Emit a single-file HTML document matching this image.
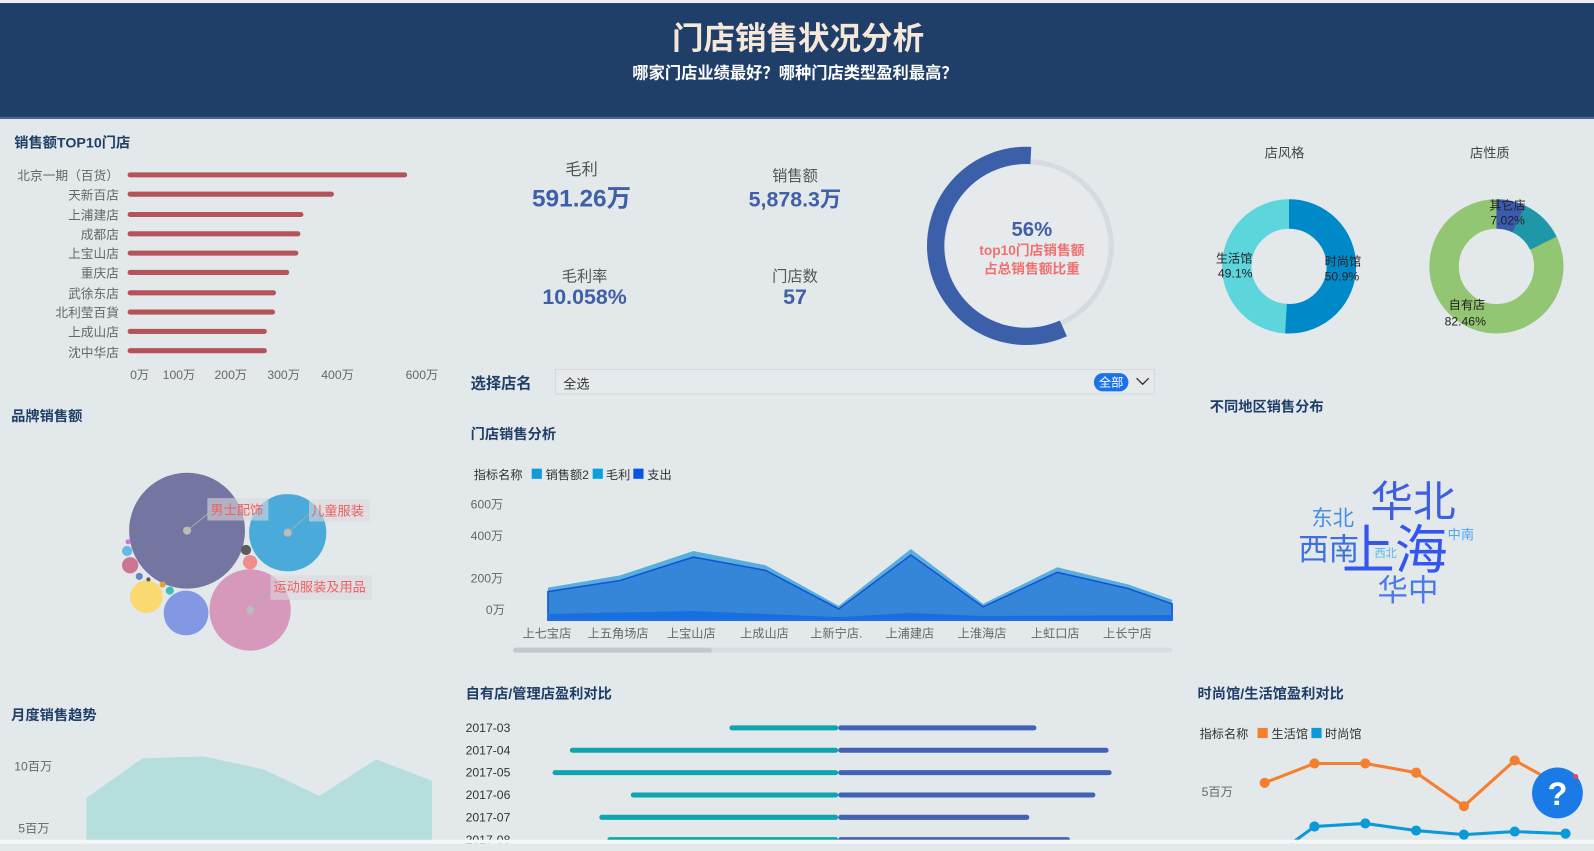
<!DOCTYPE html>
<html><head><meta charset="utf-8"><style>
*{margin:0;padding:0;box-sizing:border-box}
body{width:1594px;height:843px;background:#e3e8eb;font-family:"Liberation Sans","Noto Sans CJK SC",sans-serif;position:relative;overflow:hidden}
#w{position:absolute;left:0;top:0;width:1568px;height:830px;transform:scale(1.0166);transform-origin:0 0}
.a{position:absolute;white-space:nowrap}
.h{font-size:14px;font-weight:bold;color:#1f3f68}
.lb{font-size:12px;color:#666}
</style></head><body><div id="w">
<div class="a" style="left:0;top:0;width:1568px;height:3px;background:#eef1f3"></div>
<div class="a" style="left:0;top:3px;width:1568px;height:114px;background:#1f3f68;border-bottom:2px solid #4b6a91"></div>
<div class="a" style="left:0;width:1570px;top:12px;text-align:center;font-size:31px;font-weight:bold;color:#f5e8da">门店销售状况分析</div>
<div class="a" style="left:0;width:1564px;top:58px;text-align:center;font-size:16px;font-weight:bold;color:#fff">哪家门店业绩最好？哪种门店类型盈利最高？</div>

<div class="a h" style="left:14px;top:130px">销售额TOP10门店</div>
<div class="a" style="left:0;top:164px;width:117px;text-align:right;font-size:12.5px;color:#666;line-height:19.3px">北京一期（百货）<br>天新百店<br>上浦建店<br>成都店<br>上宝山店<br>重庆店<br>武徐东店<br>北利莹百貨<br>上成山店<br>沈中华店</div>
<div class="a lb" style="left:128px;top:360px">0万</div>
<div class="a lb" style="left:160px;top:360px">100万</div>
<div class="a lb" style="left:211px;top:360px">200万</div>
<div class="a lb" style="left:263px;top:360px">300万</div>
<div class="a lb" style="left:316px;top:360px">400万</div>
<div class="a lb" style="left:399px;top:360px">600万</div>

<div class="a" style="left:522px;width:100px;top:153px;text-align:center;font-size:16px;color:#555">毛利</div>
<div class="a" style="left:502px;width:140px;top:175px;text-align:center;font-size:24px;color:#3f5fa8;font-weight:bold">591.26万</div>
<div class="a" style="left:732px;width:100px;top:162px;text-align:center;font-size:15px;color:#555">销售额</div>
<div class="a" style="left:712px;width:140px;top:180px;text-align:center;font-size:21px;color:#3f5fa8;font-weight:bold">5,878.3万</div>
<div class="a" style="left:525px;width:100px;top:261px;text-align:center;font-size:15px;color:#555">毛利率</div>
<div class="a" style="left:505px;width:140px;top:281px;text-align:center;font-size:21px;color:#3f5fa8;font-weight:bold">10.058%</div>
<div class="a" style="left:732px;width:100px;top:261px;text-align:center;font-size:15px;color:#555">门店数</div>
<div class="a" style="left:732px;width:100px;top:281px;text-align:center;font-size:21px;color:#3f5fa8;font-weight:bold">57</div>

<div class="a" style="left:1244px;top:140px;font-size:13px;color:#444">店风格</div>
<div class="a" style="left:1446px;top:140px;font-size:13px;color:#444">店性质</div>

<div class="a" style="left:463px;top:366px;font-size:15px;font-weight:bold;color:#1f3f68">选择店名</div>
<div class="a" style="left:546px;top:363px;width:590px;height:25px;background:#e6eaed;border:1px solid #d3d8dc"></div>
<div class="a" style="left:554px;top:367px;font-size:13px;color:#333">全选</div>
<div class="a" style="left:1076px;top:367px;width:34px;height:18px;border-radius:9px;background:#1a73e8;color:#fff;font-size:12px;text-align:center;line-height:18px">全部</div>

<div class="a h" style="left:11px;top:399px">品牌销售额</div>
<div class="a h" style="left:463px;top:417px">门店销售分析</div>
<div class="a h" style="left:1190px;top:390px">不同地区销售分布</div>
<div class="a h" style="left:458px;top:672px">自有店/管理店盈利对比</div>
<div class="a h" style="left:11px;top:693px">月度销售趋势</div>
<div class="a h" style="left:1178px;top:672px">时尚馆/生活馆盈利对比</div>

<div class="a" style="left:466px;top:458px;font-size:12px;color:#333">指标名称 <span style="display:inline-block;width:10px;height:10px;background:#0f9ad8;margin-left:6px"></span> 销售额2 <span style="display:inline-block;width:10px;height:10px;background:#0aa0e0"></span> 毛利 <span style="display:inline-block;width:10px;height:10px;background:#0a55e0"></span> 支出</div>
<div class="a lb" style="left:463px;top:487px">600万</div>
<div class="a lb" style="left:463px;top:518px">400万</div>
<div class="a lb" style="left:463px;top:560px">200万</div>
<div class="a lb" style="left:478px;top:591px">0万</div>
<div class="a lb" style="left:514px;top:614px">上七宝店</div>
<div class="a lb" style="left:578px;top:614px">上五角场店</div>
<div class="a lb" style="left:656px;top:614px">上宝山店</div>
<div class="a lb" style="left:728px;top:614px">上成山店</div>
<div class="a lb" style="left:797px;top:614px">上新宁店.</div>
<div class="a lb" style="left:871px;top:614px">上浦建店</div>
<div class="a lb" style="left:942px;top:614px">上淮海店</div>
<div class="a lb" style="left:1014px;top:614px">上虹口店</div>
<div class="a lb" style="left:1085px;top:614px">上长宁店</div>

<div class="a" style="left:458px;top:705px;font-size:12px;color:#333;line-height:22px">2017-03<br>2017-04<br>2017-05<br>2017-06<br>2017-07<br>2017-08</div>
<div class="a lb" style="left:14px;top:745px">10百万</div>
<div class="a lb" style="left:18px;top:806px">5百万</div>
<div class="a" style="left:1180px;top:713px;font-size:12px;color:#333">指标名称 <span style="display:inline-block;width:10px;height:10px;background:#f47f2e;margin-left:6px"></span> 生活馆 <span style="display:inline-block;width:10px;height:10px;background:#0a9ad8"></span> 时尚馆</div>
<div class="a lb" style="left:1182px;top:770px">5百万</div>

<svg class="a" style="left:0;top:0" width="1568" height="830">
<g stroke="#b5525a" stroke-width="5" stroke-linecap="round">
<line x1="128" y1="172" x2="398" y2="172"/><line x1="128" y1="191" x2="326" y2="191"/><line x1="128" y1="211" x2="296" y2="211"/><line x1="128" y1="230" x2="293" y2="230"/><line x1="128" y1="249" x2="291" y2="249"/><line x1="128" y1="268" x2="282" y2="268"/><line x1="128" y1="288" x2="269" y2="288"/><line x1="128" y1="307" x2="268" y2="307"/><line x1="128" y1="326" x2="260" y2="326"/><line x1="128" y1="345" x2="260" y2="345"/>
</g>
<circle cx="1010" cy="242" r="83" fill="#e6eaec" stroke="#d6dbdf" stroke-width="5"/>
<path d="M1014 153 A89 89 0 1 0 1046 323" fill="none" stroke="#3b5fa8" stroke-width="17"/>
<text x="1015" y="232" text-anchor="middle" font-size="20" fill="#3f5fa8" font-weight="bold">56%</text>
<text x="1015" y="251" text-anchor="middle" font-size="13.5" fill="#f07070" font-weight="bold">top10门店销售额</text>
<text x="1015" y="269" text-anchor="middle" font-size="13.5" fill="#f07070" font-weight="bold">占总销售额比重</text>

<g transform="rotate(-90 1268 262)" fill="none" stroke-width="29">
<circle cx="1268" cy="262" r="51.5" stroke="#5dd5dc"/>
<circle cx="1268" cy="262" r="51.5" stroke="#0089c8" stroke-dasharray="164.7 400"/>
</g>
<text x="1196" y="258" font-size="12" fill="#222">生活馆</text><text x="1198" y="273" font-size="12" fill="#222">49.1%</text>
<text x="1303" y="261" font-size="12" fill="#222">时尚馆</text><text x="1303" y="276" font-size="12" fill="#222">50.9%</text>
<g transform="rotate(-90 1472 262)" fill="none" stroke-width="29">
<circle cx="1472" cy="262" r="51.5" stroke="#92c672"/>
<circle cx="1472" cy="262" r="51.5" stroke="#1e98a8" stroke-dasharray="0 22.7 34.5 400"/>
<circle cx="1472" cy="262" r="51.5" stroke="#3a5bb0" stroke-dasharray="22.7 400"/>
</g>
<text x="1465" y="206" font-size="12" fill="#222">其它店</text><text x="1466" y="221" font-size="12" fill="#222">7.02%</text>
<text x="1425" y="304" font-size="12" fill="#222">自有店</text><text x="1421" y="320" font-size="12" fill="#222">82.46%</text>
<path d="M1118 372 l6 6 l6 -6" fill="none" stroke="#333" stroke-width="1.3"/>

<g opacity="0.95">
<circle cx="184" cy="522" r="57" fill="#6f6f9e"/>
<circle cx="283" cy="524" r="38" fill="#42a7d8"/>
<circle cx="246" cy="600" r="40" fill="#d595ba"/>
<circle cx="183" cy="603" r="22" fill="#7e94e2"/>
<circle cx="144" cy="587" r="16" fill="#fbd96a"/>
<circle cx="128" cy="556" r="8" fill="#cc7090"/>
<circle cx="125" cy="542" r="5" fill="#60b8e8"/>
<circle cx="126" cy="533" r="2.5" fill="#d070d0"/>
<circle cx="242" cy="541" r="5" fill="#555"/>
<circle cx="246" cy="553" r="7" fill="#f08888"/>
<circle cx="137" cy="567" r="3.5" fill="#6080c0"/>
<circle cx="167" cy="581" r="4" fill="#30c0b0"/>
<circle cx="160" cy="575" r="3" fill="#e0a030"/>
<circle cx="146" cy="570" r="2" fill="#555"/>
</g>
<g stroke="#aaa" stroke-width="1"><line x1="184" y1="522" x2="205" y2="505"/><line x1="283" y1="524" x2="305" y2="505"/><line x1="246" y1="600" x2="268" y2="580"/></g>
<g fill="#bbb"><circle cx="184" cy="522" r="4"/><circle cx="283" cy="524" r="4"/><circle cx="246" cy="600" r="4"/></g>
<rect x="204" y="490" width="60" height="22" fill="#d8d8dc" opacity="0.6"/>
<rect x="304" y="491" width="60" height="22" fill="#d8d8dc" opacity="0.6"/>
<rect x="266" y="566" width="100" height="24" fill="#d8d8dc" opacity="0.6"/>
<text x="207" y="506" font-size="13" fill="#f06060">男士配饰</text>
<text x="306" y="507" font-size="13" fill="#f06060">儿童服装</text>
<text x="269" y="582" font-size="13" fill="#f06060">运动服装及用品</text>

<path d="M539 578 L610 566 L682 542 L753 556 L825 596 L896 540 L967 594 L1040 558 L1110 575 L1153 590 L1153 610 L539 610Z" fill="#5aaedc"/>
<path d="M539 582 L610 571 L682 548 L753 561 L825 599 L896 546 L967 597 L1040 563 L1110 579 L1153 594 L1153 610 L539 610Z" fill="#3585d8" stroke="#0d55d8" stroke-width="1.5"/>
<path d="M539 604 L682 601 L825 607 L896 603 L967 606 L1153 605 L1153 610 L539 610Z" fill="#1a6fe0"/>
<rect x="505" y="637" width="648" height="5" rx="2" fill="#d9dde1"/>
<rect x="505" y="637" width="195" height="5" rx="2" fill="#c3c8cd"/>

<g font-family="Noto Sans CJK SC,sans-serif">
<text x="1348" y="508" font-size="42" fill="#3d5fe0">华北</text>
<text x="1290" y="517" font-size="21" fill="#4a90e2">东北</text>
<text x="1277" y="551" font-size="30" fill="#3d6fe0">西南</text>
<text x="1320" y="559" font-size="52" fill="#3456ee">上海</text>
<text x="1352" y="548" font-size="11" fill="#5ab8e8">西北</text>
<text x="1424" y="530" font-size="13" fill="#4aa8f0">中南</text>
<text x="1355" y="591" font-size="30" fill="#4a7ae8">华中</text>
</g>

<g stroke-width="5" stroke-linecap="round">
<g stroke="#0ea5ad"><line x1="720" y1="716" x2="822" y2="716"/><line x1="563" y1="738" x2="822" y2="738"/><line x1="546" y1="760" x2="822" y2="760"/><line x1="623" y1="782" x2="822" y2="782"/><line x1="592" y1="804" x2="822" y2="804"/><line x1="600" y1="826" x2="822" y2="826"/></g>
<g stroke="#4262b5"><line x1="827" y1="716" x2="1017" y2="716"/><line x1="827" y1="738" x2="1088" y2="738"/><line x1="827" y1="760" x2="1091" y2="760"/><line x1="827" y1="782" x2="1075" y2="782"/><line x1="827" y1="804" x2="1010" y2="804"/><line x1="827" y1="826" x2="1050" y2="826"/></g>
</g>

<path d="M85 785 L140 746 L200 744 L260 757 L314 783 L370 747 L425 768 L425 843 L85 843Z" fill="#b5dedd"/>

<g fill="none" stroke-width="3">
<polyline stroke="#f47f2e" points="1244,770 1293,751 1343,751 1393,760 1440,793 1490,748 1530,770"/>
<polyline stroke="#0a9ad8" points="1270,830 1293,813 1343,810 1393,817 1440,821 1490,818 1540,820"/>
</g>
<g fill="#f47f2e"><circle cx="1244" cy="770" r="5"/><circle cx="1293" cy="751" r="5"/><circle cx="1343" cy="751" r="5"/><circle cx="1393" cy="760" r="5"/><circle cx="1440" cy="793" r="5"/><circle cx="1490" cy="748" r="5"/></g>
<g fill="#0a9ad8"><circle cx="1293" cy="813" r="5"/><circle cx="1343" cy="810" r="5"/><circle cx="1393" cy="817" r="5"/><circle cx="1440" cy="821" r="5"/><circle cx="1490" cy="818" r="5"/><circle cx="1540" cy="820" r="5"/></g>
<circle cx="1532" cy="780" r="25" fill="#1a7be6"/>
<circle cx="1550" cy="764" r="2.5" fill="#e84060"/>
<text x="1532" y="792" text-anchor="middle" font-size="32" font-weight="bold" fill="#fff">?</text>
</svg>
<div class="a" style="left:0;top:826px;width:1568px;height:4px;background:#f4f6f7"></div>
</div></body></html>
